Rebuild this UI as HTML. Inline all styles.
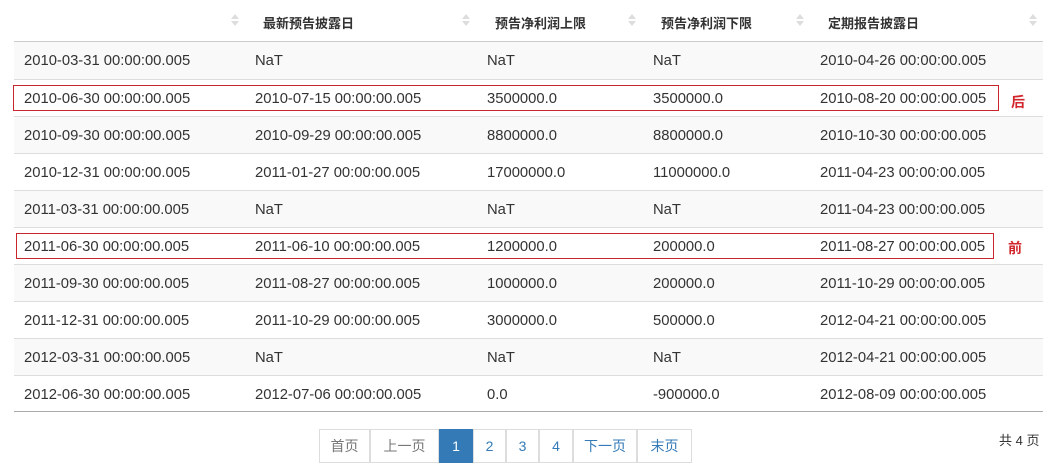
<!DOCTYPE html>
<html><head><meta charset="utf-8"><style>
*{margin:0;padding:0;box-sizing:border-box}
body{width:1048px;height:472px;background:#fff;position:relative;font-family:"Liberation Sans","Noto Sans CJK SC",sans-serif;font-size:14.8px;color:#333;overflow:hidden}
.r{position:absolute;left:14px;width:1029px;height:37px;border-top:1px solid #ddd}
.r.g{background:#f9f9f9}
.c{position:absolute;top:11px;line-height:17px;white-space:nowrap}
.h{position:absolute;top:13px;font-weight:bold;font-size:13px;color:#333}
.s{position:absolute;top:13px;width:8px;height:16px}
.s:before{content:"";position:absolute;left:0;top:1px;border:4px solid transparent;border-bottom:5px solid #ddd;border-top:0}
.s:after{content:"";position:absolute;left:0;top:8px;border:4px solid transparent;border-top:5px solid #ddd;border-bottom:0}
.box{position:absolute;border:1px solid #c9262c}
.lab{position:absolute;color:#d0262c;font-weight:bold;font-size:14px}
.pg{position:absolute;top:429px;height:34px;border:1px solid #ddd;margin-left:-1px;text-align:center;line-height:32px;color:#337ab7;font-size:14px}
</style></head><body>
<div class="s" style="left:231px"></div><div class="h" style="left:263px">最新预告披露日</div>
<div class="s" style="left:462px"></div><div class="h" style="left:495px">预告净利润上限</div>
<div class="s" style="left:628px"></div><div class="h" style="left:661px">预告净利润下限</div>
<div class="s" style="left:796px"></div><div class="h" style="left:828px">定期报告披露日</div>
<div class="s" style="left:1029px"></div>
<div style="position:absolute;left:14px;top:41px;width:1029px;height:2px;background:#ccc"></div>

<div class="r g" style="top:42px;border-top:0"><span class="c" style="left:10px">2010-03-31 00:00:00.005</span><span class="c" style="left:241px">NaT</span><span class="c" style="left:473px">NaT</span><span class="c" style="left:639px">NaT</span><span class="c" style="left:806px">2010-04-26 00:00:00.005</span></div>
<div class="r" style="top:79px"><span class="c" style="left:10px">2010-06-30 00:00:00.005</span><span class="c" style="left:241px">2010-07-15 00:00:00.005</span><span class="c" style="left:473px">3500000.0</span><span class="c" style="left:639px">3500000.0</span><span class="c" style="left:806px">2010-08-20 00:00:00.005</span></div>
<div class="r g" style="top:116px"><span class="c" style="left:10px">2010-09-30 00:00:00.005</span><span class="c" style="left:241px">2010-09-29 00:00:00.005</span><span class="c" style="left:473px">8800000.0</span><span class="c" style="left:639px">8800000.0</span><span class="c" style="left:806px">2010-10-30 00:00:00.005</span></div>
<div class="r" style="top:153px"><span class="c" style="left:10px">2010-12-31 00:00:00.005</span><span class="c" style="left:241px">2011-01-27 00:00:00.005</span><span class="c" style="left:473px">17000000.0</span><span class="c" style="left:639px">11000000.0</span><span class="c" style="left:806px">2011-04-23 00:00:00.005</span></div>
<div class="r g" style="top:190px"><span class="c" style="left:10px">2011-03-31 00:00:00.005</span><span class="c" style="left:241px">NaT</span><span class="c" style="left:473px">NaT</span><span class="c" style="left:639px">NaT</span><span class="c" style="left:806px">2011-04-23 00:00:00.005</span></div>
<div class="r" style="top:227px"><span class="c" style="left:10px">2011-06-30 00:00:00.005</span><span class="c" style="left:241px">2011-06-10 00:00:00.005</span><span class="c" style="left:473px">1200000.0</span><span class="c" style="left:639px">200000.0</span><span class="c" style="left:806px">2011-08-27 00:00:00.005</span></div>
<div class="r g" style="top:264px"><span class="c" style="left:10px">2011-09-30 00:00:00.005</span><span class="c" style="left:241px">2011-08-27 00:00:00.005</span><span class="c" style="left:473px">1000000.0</span><span class="c" style="left:639px">200000.0</span><span class="c" style="left:806px">2011-10-29 00:00:00.005</span></div>
<div class="r" style="top:301px"><span class="c" style="left:10px">2011-12-31 00:00:00.005</span><span class="c" style="left:241px">2011-10-29 00:00:00.005</span><span class="c" style="left:473px">3000000.0</span><span class="c" style="left:639px">500000.0</span><span class="c" style="left:806px">2012-04-21 00:00:00.005</span></div>
<div class="r g" style="top:338px"><span class="c" style="left:10px">2012-03-31 00:00:00.005</span><span class="c" style="left:241px">NaT</span><span class="c" style="left:473px">NaT</span><span class="c" style="left:639px">NaT</span><span class="c" style="left:806px">2012-04-21 00:00:00.005</span></div>
<div class="r" style="top:375px;border-bottom:1px solid #aaa"><span class="c" style="left:10px">2012-06-30 00:00:00.005</span><span class="c" style="left:241px">2012-07-06 00:00:00.005</span><span class="c" style="left:473px">0.0</span><span class="c" style="left:639px">-900000.0</span><span class="c" style="left:806px">2012-08-09 00:00:00.005</span></div>

<div class="box" style="left:13px;top:85px;width:986px;height:26px"></div>
<div class="lab" style="left:1011px;top:92px">后</div>
<div class="box" style="left:16px;top:233px;width:978px;height:26px"></div>
<div class="lab" style="left:1008px;top:238px">前</div>

<div class="pg" style="left:320px;width:51px;color:#777">首页</div>
<div class="pg" style="left:371px;width:69px;color:#777">上一页</div>
<div class="pg" style="left:440px;width:34px;background:#337ab7;border-color:#337ab7;color:#fff">1</div>
<div class="pg" style="left:474px;width:33px">2</div>
<div class="pg" style="left:507px;width:33px">3</div>
<div class="pg" style="left:540px;width:34px">4</div>
<div class="pg" style="left:574px;width:64px">下一页</div>
<div class="pg" style="left:638px;width:55px">末页</div>
<div style="position:absolute;left:999px;top:430px;font-size:13px;color:#333">共 4 页</div>
</body></html>
